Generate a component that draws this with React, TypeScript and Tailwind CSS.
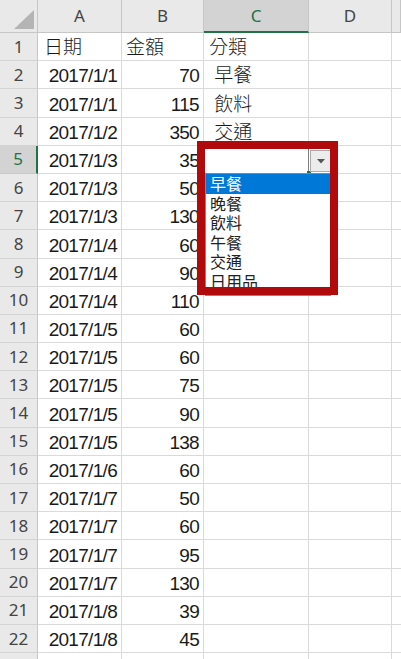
type Row = { date: string; amount: string; cat: string };

const data: Row[] = [
  { date: "日期", amount: "金額", cat: "分類" },
  { date: "2017/1/1", amount: "70", cat: " 早餐" },
  { date: "2017/1/1", amount: "115", cat: " 飲料" },
  { date: "2017/1/2", amount: "350", cat: " 交通" },
  { date: "2017/1/3", amount: "35", cat: "" },
  { date: "2017/1/3", amount: "50", cat: "" },
  { date: "2017/1/3", amount: "130", cat: "" },
  { date: "2017/1/4", amount: "60", cat: "" },
  { date: "2017/1/4", amount: "90", cat: "" },
  { date: "2017/1/4", amount: "110", cat: "" },
  { date: "2017/1/5", amount: "60", cat: "" },
  { date: "2017/1/5", amount: "60", cat: "" },
  { date: "2017/1/5", amount: "75", cat: "" },
  { date: "2017/1/5", amount: "90", cat: "" },
  { date: "2017/1/5", amount: "138", cat: "" },
  { date: "2017/1/6", amount: "60", cat: "" },
  { date: "2017/1/7", amount: "50", cat: "" },
  { date: "2017/1/7", amount: "60", cat: "" },
  { date: "2017/1/7", amount: "95", cat: "" },
  { date: "2017/1/7", amount: "130", cat: "" },
  { date: "2017/1/8", amount: "39", cat: "" },
  { date: "2017/1/8", amount: "45", cat: "" },
  { date: "", amount: "", cat: "" },
];

const options = ["早餐", "晚餐", "飲料", "午餐", "交通", "日用品"];

const cellFont = {
  fontFamily: '"Liberation Sans", "Noto Sans CJK TC", sans-serif',
};
const uiFont = {
  fontFamily: '"Noto Sans", "Liberation Sans", sans-serif',
};

function ColHeader({ label, active }: { label: string; active?: boolean }) {
  return (
    <div
      className={
        active
          ? "flex items-center justify-center border-r border-[#c6c6c6] border-b-2 border-b-[#217346] bg-[#d3d3d3] text-[17px] text-[#217346]"
          : "flex items-center justify-center border-r border-[#c6c6c6] border-b border-b-[#c6c6c6] text-[17px] text-[#444]"
      }
      style={uiFont}
    >
      {label}
    </div>
  );
}

export default function App() {
  return (
    <div className="relative h-[659px] w-[401px] overflow-hidden bg-white" style={cellFont}>
      {/* column headers */}
      <div className="grid h-[33px] grid-cols-[38px_84px_82px_105px_83px_1fr] bg-[#e9e9e9]">
        <div className="flex items-end justify-end border-r border-b border-[#c6c6c6] pr-[3px] pb-[3px]">
          <svg width="20" height="19" viewBox="0 0 20 19">
            <polygon points="20,0 20,19 0,19" fill="#b4b4b4" />
          </svg>
        </div>
        <ColHeader label="A" />
        <ColHeader label="B" />
        <ColHeader label="C" active />
        <ColHeader label="D" />
        <ColHeader label="" />
      </div>

      {/* body rows */}
      {data.map((r, i) => {
        const n = i + 1;
        const active = n === 5;
        const isHead = n === 1;
        return (
          <div
            key={n}
            className="grid h-[28.2px] grid-cols-[38px_84px_82px_105px_83px_1fr] text-[19px] leading-[22px] text-[#1a1a1a]"
          >
            <div
              className={
                active
                  ? "flex items-center justify-center border-r-2 border-r-[#217346] border-b border-b-[#c9c9c9] bg-[#d3d3d3] text-[17px] text-[#217346]"
                  : "flex items-center justify-center border-r border-r-[#c6c6c6] border-b border-b-[#d4d4d4] bg-[#e9e9e9] text-[17px] text-[#444]"
              }
              style={uiFont}
            >
              {n < 23 ? n : ""}
            </div>
            <div
              className={
                isHead
                  ? "flex items-end overflow-hidden whitespace-pre border-r border-b border-[#dadada] pb-[1px] pl-[6px] font-light"
                  : "flex items-end justify-end overflow-hidden whitespace-pre border-r border-b border-[#dadada] pb-[1px] pr-[4px] tracking-[-0.7px]"
              }
            >
              {r.date}
            </div>
            <div
              className={
                isHead
                  ? "flex items-end overflow-hidden whitespace-pre border-r border-b border-[#dadada] pb-[1px] pl-[4px] font-light"
                  : "flex items-end justify-end overflow-hidden whitespace-pre border-r border-b border-[#dadada] pb-[1px] pr-[4px] tracking-[-0.7px]"
              }
            >
              {r.amount}
            </div>
            <div className="flex items-end overflow-hidden whitespace-pre border-r border-b border-[#dadada] pb-[1px] pl-[5px] font-light">
              {r.cat}
            </div>
            <div className="border-r border-b border-[#dadada]" />
            <div className="border-b border-[#dadada]" />
          </div>
        );
      })}

      {/* in-cell dropdown for C5 */}
      <div className="absolute left-[205px] top-[146px] h-[27px] w-[104px] border-r border-[#7f7f7f] bg-white" />
      <div className="absolute left-[307px] top-[171px] h-[4px] w-[4px] bg-[#217346]" />
      <div className="absolute left-[310px] top-[150px] flex h-[22px] w-[21px] items-center justify-center border border-[#ababab] bg-[#ececec]">
        <svg width="8" height="5" viewBox="0 0 8 5">
          <polygon points="0,0 8,0 4,4.5" fill="#555" />
        </svg>
      </div>
      <div
        className="absolute left-[205px] top-[173px] flex w-[126px] flex-col border border-[#828790] bg-white pb-[4px] text-[16px] leading-[19px] text-[#222]"
        style={{ fontFamily: '"Noto Sans CJK TC", sans-serif' }}
      >
        {options.map((o, i) => (
          <div
            key={o}
            className={
              i === 0
                ? "flex h-[19.5px] items-center bg-[#0078d7] pl-[4px] text-white"
                : "flex h-[19.5px] items-center pl-[4px]"
            }
          >
            {o}
          </div>
        ))}
      </div>

      {/* red highlight frame */}
      <div className="absolute left-[197px] top-[141px] h-[154px] w-[141px] border-[8px] border-[#b00a0c]" />
    </div>
  );
}
